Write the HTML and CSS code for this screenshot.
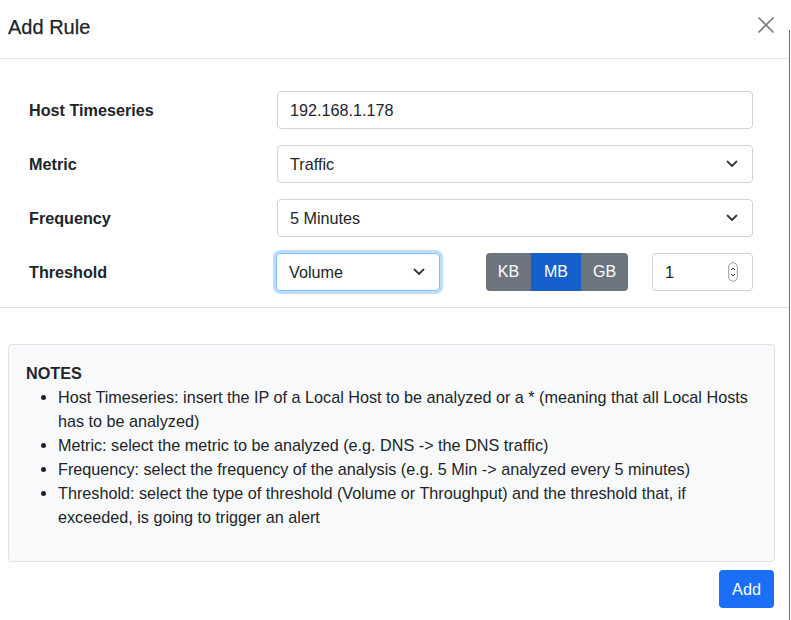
FILE: index.html
```html
<!DOCTYPE html>
<html>
<head>
<meta charset="utf-8">
<link rel="stylesheet" href="styles.css">
</head>
<body>
<div class="modal">
  <div class="modal-header">
    <h5 class="title">Add Rule</h5>
    <span class="close" aria-label="Close">
      <svg width="18" height="18" viewBox="0 0 18 18"><path d="M1.5 1.5 L16.5 16.5 M16.5 1.5 L1.5 16.5" stroke="#7b7b7b" stroke-width="1.7" fill="none"/></svg>
    </span>
  </div>
  <div class="form">
    <div class="row">
      <label class="label">Host Timeseries</label>
      <div class="control"><div class="input">192.168.1.178</div></div>
    </div>
    <div class="row">
      <label class="label">Metric</label>
      <div class="control"><div class="input select">Traffic<svg class="chev" width="12" height="8" viewBox="0 0 12 8"><path d="M1.5 1.5 L6 6 L10.5 1.5" stroke="#343a40" stroke-width="1.8" fill="none" stroke-linecap="round" stroke-linejoin="round"/></svg></div></div>
    </div>
    <div class="row">
      <label class="label">Frequency</label>
      <div class="control"><div class="input select">5 Minutes<svg class="chev" width="12" height="8" viewBox="0 0 12 8"><path d="M1.5 1.5 L6 6 L10.5 1.5" stroke="#343a40" stroke-width="1.8" fill="none" stroke-linecap="round" stroke-linejoin="round"/></svg></div></div>
    </div>
    <div class="row">
      <label class="label">Threshold</label>
      <div class="control threshold">
        <div class="input select focus small">Volume<svg class="chev" width="12" height="8" viewBox="0 0 12 8"><path d="M1.5 1.5 L6 6 L10.5 1.5" stroke="#343a40" stroke-width="1.8" fill="none" stroke-linecap="round" stroke-linejoin="round"/></svg></div>
        <div class="btn-group">
          <span class="btn">KB</span><span class="btn active">MB</span><span class="btn">GB</span>
        </div>
        <div class="input number">1<svg class="spin" width="10" height="20" viewBox="0 0 10 20"><rect x="0.7" y="0.7" width="8.6" height="18.6" rx="4.3" fill="#fff" stroke="#9a9a9a" stroke-width="1"/><path d="M3 8 L5 6 L7 8 M3 12 L5 14 L7 12" stroke="#444" stroke-width="1" fill="none"/></svg></div>
      </div>
    </div>
  </div>
  <div class="notes">
    <div class="notes-title">NOTES</div>
    <ul>
      <li>Host Timeseries: insert the IP of a Local Host to be analyzed or a * (meaning that all Local Hosts has to be analyzed)</li>
      <li>Metric: select the metric to be analyzed (e.g. DNS -&gt; the DNS traffic)</li>
      <li>Frequency: select the frequency of the analysis (e.g. 5 Min -&gt; analyzed every 5 minutes)</li>
      <li>Threshold: select the type of threshold (Volume or Throughput) and the threshold that, if exceeded, is going to trigger an alert</li>
    </ul>
  </div>
  <div class="footer">
    <span class="add">Add</span>
  </div>
</div>
</body>
</html>
```

FILE: styles.css
```css
html, body {
  margin: 0;
  padding: 0;
  background: #fff;
}
body {
  font-family: "Liberation Sans", Arial, sans-serif;
  font-size: 16px;
  color: #212529;
  width: 791px;
  height: 620px;
  overflow: hidden;
}
.modal {
  position: relative;
  width: 791px;
  height: 620px;
}
.modal::after {
  content: "";
  position: absolute;
  right: 1px;
  top: 30px;
  bottom: 0;
  width: 1px;
  background: #6a6a6a;
}
.modal-header {
  height: 58px;
  border-bottom: 1px solid #dee2e6;
  display: flex;
  align-items: center;
  justify-content: space-between;
  padding: 0 14px 0 8px;
  box-sizing: content-box;
  margin-right: 2px;
}
.title {
  margin: 0;
  font-size: 20px;
  font-weight: 500;
  color: #212529;
  padding-bottom: 3px;
  -webkit-text-stroke: 0.25px #212529;
}
.close {
  display: flex;
  padding-bottom: 9px;
}
.form {
  padding: 32px 36px 16px 29px;
  display: flex;
  flex-direction: column;
  gap: 16px;
  border-bottom: 1px solid #dee2e6;
  margin-right: 2px;
}
.row {
  display: flex;
  align-items: center;
  height: 38px;
}
.label {
  width: 249px;
  font-weight: bold;
  font-size: 16.2px;
}
.control {
  flex: 1;
  display: flex;
}
.input {
  box-sizing: border-box;
  height: 38px;
  width: 476px;
  border: 1px solid #ced4da;
  border-radius: 4px;
  padding: 0 12px;
  display: flex;
  align-items: center;
  font-size: 16.2px;
  color: #212529;
  background: #fff;
}
.select {
  justify-content: space-between;
  padding-right: 14px;
}
.chev {
  display: block;
}
.focus {
  border-color: #80bdff;
  box-shadow: 0 0 0 3px rgba(0, 123, 255, 0.25);
}
.threshold {
  align-items: center;
}
.small {
  width: 164px;
}
.btn-group {
  margin-left: 46px;
  display: flex;
  height: 38px;
  border-radius: 4px;
  overflow: hidden;
}
.btn {
  display: flex;
  align-items: center;
  justify-content: center;
  background: #6c757d;
  color: #fff;
  font-size: 16px;
  width: 45px;
}
.btn.active {
  background: #155fca;
  width: 50px;
}
.btn:last-child {
  width: 47px;
}
.number {
  margin-left: 24px;
  width: 101px;
  justify-content: space-between;
  padding-right: 14px;
}
.spin {
  display: block;
}
.notes {
  margin: 36px 16px 0 8px;
  background: #f8f9fa;
  border: 1px solid #dee2e6;
  border-radius: 4px;
  padding: 16px 16px 16px 17px;
  height: 218px;
  box-sizing: border-box;
  line-height: 24px;
  font-size: 16.2px;
}
.notes-title {
  font-weight: bold;
}
.notes ul {
  margin: 0;
  padding-left: 32px;
}
.footer {
  display: flex;
  justify-content: flex-end;
  padding: 8px 17px 0 0;
}
.add {
  background: #1b6ef6;
  color: #fff;
  border-radius: 4px;
  height: 38px;
  width: 55px;
  display: flex;
  align-items: center;
  justify-content: center;
  font-size: 16.2px;
}
```
